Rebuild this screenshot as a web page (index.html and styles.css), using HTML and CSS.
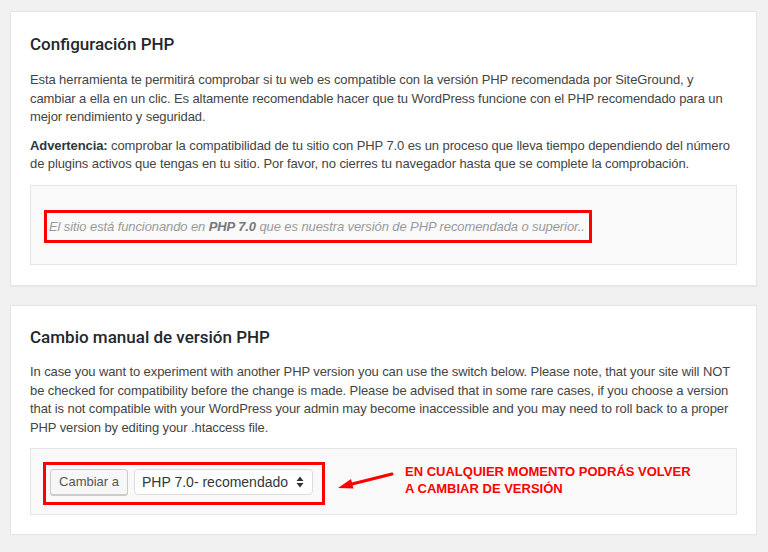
FILE: index.html
```html
<!DOCTYPE html>
<html lang="es">
<head>
<meta charset="utf-8">
<title>Configuración PHP</title>
<link rel="stylesheet" href="styles.css">
</head>
<body>
<div class="wrap">
  <section class="card card-check">
    <h2 class="card-title">Configuración PHP</h2>
    <p class="text">Esta herramienta te permitirá comprobar si tu web es compatible con la versión PHP recomendada por SiteGround, y<br>cambiar a ella en un clic. Es altamente recomendable hacer que tu WordPress funcione con el PHP recomendado para un<br>mejor rendimiento y seguridad.</p>
    <p class="text text-warn"><strong>Advertencia:</strong> comprobar la compatibilidad de tu sitio con PHP 7.0 es un proceso que lleva tiempo dependiendo del número<br>de plugins activos que tengas en tu sitio. Por favor, no cierres tu navegador hasta que se complete la comprobación.</p>
    <div class="inner inner-status">
      <div class="highlight highlight-status">
        <span class="status">El sitio está funcionando en <b>PHP 7.0</b> que es nuestra versión de PHP recomendada o superior..</span>
      </div>
    </div>
  </section>

  <section class="card card-manual">
    <h2 class="card-title">Cambio manual de versión PHP</h2>
    <p class="text">In case you want to experiment with another PHP version you can use the switch below. Please note, that your site will NOT<br>be checked for compatibility before the change is made. Please be advised that in some rare cases, if you choose a version<br>that is not compatible with your WordPress your admin may become inaccessible and you may need to roll back to a proper<br>PHP version by editing your .htaccess file.</p>
    <div class="inner inner-switch">
      <div class="highlight highlight-switch">
        <button class="btn" type="button">Cambiar a</button>
        <div class="select">
          <span class="select-label">PHP 7.0- recomendado</span>
          <svg class="select-arrows" width="8" height="12" viewBox="0 0 8 12"><path d="M4 0.5 L7.5 5 L0.5 5 Z M4 11.5 L7.5 7 L0.5 7 Z" fill="#333"/></svg>
        </div>
      </div>
      <svg class="arrow" width="60" height="24" viewBox="0 0 60 24">
        <path d="M56 6 L14 16.5" stroke="#f00" stroke-width="3" stroke-linecap="round" fill="none"/>
        <path d="M2 20 L15 11 L17.5 20.5 Z" fill="#f00"/>
      </svg>
      <p class="note">EN CUALQUIER MOMENTO PODRÁS VOLVER<br>A CAMBIAR DE VERSIÓN</p>
    </div>
  </section>
</div>
</body>
</html>
```

FILE: styles.css
```css
* { box-sizing: border-box; }

html, body {
  margin: 0;
  padding: 0;
  background: #f1f1f1;
}

body {
  font-family: "Liberation Sans", Arial, sans-serif;
  font-size: 13px;
  color: #444;
}

.wrap {
  padding: 11px 11px 0 10px;
  display: flex;
  flex-direction: column;
  gap: 19px;
}

.card {
  background: #fff;
  border: 1px solid #e5e5e5;
  box-shadow: 0 1px 1px rgba(0, 0, 0, 0.04);
  padding: 0 19px 19px 19px;
}

.card-check { padding-bottom: 20px; }

.card-title {
  margin: 20px 0 15px 0;
  font-family: Roboto, "Liberation Sans", sans-serif;
  font-size: 17px;
  line-height: 22px;
  font-weight: 500;
  color: #23282d;
}

.card-check .card-title { margin: 21px 0 16px 0; }

.text {
  margin: 0;
  line-height: 18.5px;
  letter-spacing: -0.1px;
  white-space: nowrap;
}

.text-warn { margin-top: 10px; }
.text-warn strong { color: #32373c; }

.inner {
  background: #f9f9f9;
  border: 1px solid #e5e5e5;
}

.inner-status {
  margin-top: 11.5px;
  height: 80px;
  padding: 24px 13px 0 13px;
}

.highlight {
  border: 3px solid #f00;
}

.highlight-status {
  display: inline-flex;
  align-items: center;
  height: 33px;
  padding: 0 4px 0 2px;
}

.status {
  font-style: italic;
  color: #999;
  letter-spacing: -0.1px;
}

.status b { color: #777; }

.inner-switch {
  margin-top: 11px;
  height: 67px;
  padding: 13px 12px 0 12px;
  display: flex;
  align-items: flex-start;
}

.highlight-switch {
  display: flex;
  align-items: center;
  gap: 6px;
  height: 43px;
  width: 282px;
  padding: 0 4px 4px 4px;
}

.btn {
  font-family: inherit;
  font-size: 13px;
  color: #555;
  background: #f7f7f7;
  border: 1px solid #ccc;
  border-radius: 3px;
  box-shadow: 0 1px 0 #ccc;
  height: 26px;
  width: 78px;
  padding: 0;
}

.select {
  display: flex;
  align-items: center;
  justify-content: space-between;
  width: 179px;
  height: 26px;
  background: #fff;
  border: 1px solid #ddd;
  border-radius: 4px;
  padding: 0 8px 0 7px;
  color: #32373c;
  font-size: 14px;
}

.arrow {
  margin: 6px 0 0 11px;
  flex: none;
}

.note {
  margin: 1px 0 0 9px;
  color: #f00;
  font-weight: 700;
  font-size: 13px;
  line-height: 17px;
}
```
